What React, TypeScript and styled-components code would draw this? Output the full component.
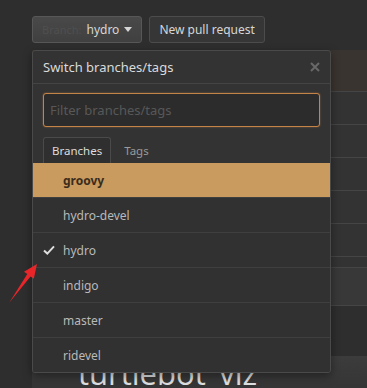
import React from 'react';
import styled, { createGlobalStyle } from 'styled-components';

const GlobalStyle = createGlobalStyle`
  html, body {
    margin: 0;
    padding: 0;
    background: #2e2e2e;
    overflow: hidden;
  }
  body {
    font-family: 'Noto Sans', 'Open Sans', sans-serif;
    color: #ddd;
  }
`;

const branches = ['groovy', 'hydro-devel', 'hydro', 'indigo', 'master', 'ridevel'];
const current = 'hydro';
const focused = 'groovy';

// heights of the file rows that peek out behind the menu
const fileRows: { height: number; tone?: 'commit' | 'light' }[] = [
  { height: 41, tone: 'commit' },
  { height: 32 },
  { height: 32 },
  { height: 32 },
  { height: 32 },
  { height: 32 },
  { height: 10 },
  { height: 37, tone: 'light' },
];

const App = () => (
  <Page>
    <GlobalStyle />
    <Toolbar>
      <Button $selected>
        <Faded>Branch:</Faded>
        <span>hydro</span>
        <Caret />
      </Button>
      <Button>New pull request</Button>
    </Toolbar>

    <Body>
      <FileList>
        {fileRows.map((row, i) => (
          <FileRow key={i} $tone={row.tone} $height={row.height} />
        ))}
      </FileList>
      <Readme>
        <ReadmeTitle>turtlebot_viz</ReadmeTitle>
      </Readme>

      <Dropdown>
        <Header>
          <span>Switch branches/tags</span>
          <svg width="10" height="10" viewBox="0 0 10 10">
            <path d="M1 1 L9 9 M9 1 L1 9" stroke="#686868" strokeWidth="2" />
          </svg>
        </Header>
        <FilterBox>
          <FilterInput placeholder="Filter branches/tags" />
        </FilterBox>
        <Tabs>
          <Tab $active>Branches</Tab>
          <Tab>Tags</Tab>
        </Tabs>
        <List>
          {branches.map((name) => (
            <Item key={name} $focused={name === focused}>
              <Check>
                {name === current && (
                  <svg width="12" height="10" viewBox="0 0 12 10">
                    <path d="M1 5.5 L4.3 8.6 L11 1.4" fill="none" stroke="#ddd" strokeWidth="2" />
                  </svg>
                )}
              </Check>
              {name}
            </Item>
          ))}
        </List>
      </Dropdown>

      <Arrow width="40" height="55" viewBox="0 0 40 55">
        <path d="M9 51 L27.3 22.1 L24 19.8 L37 12 L33.8 26.8 L30.5 24.5 Z" fill="#e8262a" />
      </Arrow>
    </Body>
  </Page>
);

export default App;

const Page = styled.div`
  height: 388px;
  overflow: hidden;
`;

const Toolbar = styled.div`
  display: flex;
  gap: 7px;
  padding: 16px 0 0 32px;
`;

const Button = styled.div<{ $selected?: boolean }>`
  display: flex;
  align-items: center;
  gap: 4px;
  height: 25px;
  padding: 0 9px;
  background: ${(p) => (p.$selected ? 'linear-gradient(#494949, #404040)' : '#363636')};
  border: 1px solid ${(p) => (p.$selected ? '#575757' : '#4c4c4c')};
  border-radius: 3px;
  font-size: 12px;
  color: #d6d6d6;
`;

const Faded = styled.span`
  color: #4f4f4f;
  font-size: 11px;
  margin-right: 1px;
`;

const Caret = styled.span`
  width: 0;
  height: 0;
  margin-left: 1px;
  border-left: 4px solid transparent;
  border-right: 4px solid transparent;
  border-top: 5px solid #d6d6d6;
`;

const Body = styled.div`
  position: relative;
  margin-top: 5px;
`;

const FileList = styled.div`
  margin: 7px 0 0 32px;
  display: flex;
  flex-direction: column;
`;

const FileRow = styled.div<{ $tone?: 'commit' | 'light'; $height: number }>`
  height: ${(p) => p.$height}px;
  border-bottom: 1px solid #454545;
  background: ${(p) =>
    p.$tone === 'commit' ? '#3a3430' : p.$tone === 'light' ? '#383838' : '#333333'};
`;

const Readme = styled.div`
  margin: 50px 0 0 32px;
  height: 60px;
  background: linear-gradient(#3c3c3c, #333 40px);
  padding-left: 46px;
`;

const ReadmeTitle = styled.div`
  font-family: 'Open Sans', sans-serif;
  font-size: 31px;
  line-height: 34px;
  color: #e0e0e0;
`;

const Dropdown = styled.div`
  position: absolute;
  left: 32px;
  top: 0;
  width: 297px;
  background: #333333;
  border: 1px solid #4a4a4a;
  border-radius: 3px;
  box-shadow: 0 3px 10px rgba(0, 0, 0, 0.4);
  overflow: hidden;
`;

const Header = styled.div`
  display: flex;
  align-items: center;
  justify-content: space-between;
  height: 32px;
  padding: 0 10px;
  border-bottom: 1px solid #444;
  font-size: 13px;
  color: #dadada;
`;

const FilterBox = styled.div`
  padding: 9px 10px 0;
`;

const FilterInput = styled.input`
  box-sizing: border-box;
  width: 100%;
  height: 34px;
  padding: 0 6px;
  background: #2c2c2c;
  border: 1px solid #c58447;
  border-radius: 3px;
  box-shadow: 0 0 2px rgba(200, 130, 70, 0.6);
  font-family: inherit;
  font-size: 13px;
  color: #ddd;
  outline: none;
  &::placeholder {
    color: #585858;
  }
`;

const Tabs = styled.div`
  display: flex;
  padding: 10px 10px 0;
`;

const Tab = styled.div<{ $active?: boolean }>`
  padding: 0 8px;
  height: 25px;
  line-height: 25px;
  font-size: 11.5px;
  border: 1px solid ${(p) => (p.$active ? '#4a4a4a' : 'transparent')};
  border-bottom: none;
  border-radius: 3px 3px 0 0;
  background: ${(p) => (p.$active ? '#2f2f2f' : 'transparent')};
  color: ${(p) => (p.$active ? '#dcdcdc' : '#9a9a9a')};
  margin-left: ${(p) => (p.$active ? '0' : '4px')};
`;

const List = styled.div`
  display: flex;
  flex-direction: column;
`;

const Item = styled.div<{ $focused?: boolean }>`
  display: flex;
  align-items: center;
  height: 34px;
  padding-left: 10px;
  border-bottom: 1px solid #3f3f3f;
  background: ${(p) => (p.$focused ? '#c99b5f' : '#313131')};
  color: ${(p) => (p.$focused ? '#3a2c1c' : '#b9b9b9')};
  font-weight: ${(p) => (p.$focused ? 700 : 400)};
  font-size: 12px;
  &:last-child {
    border-bottom: none;
  }
`;

const Check = styled.span`
  display: inline-flex;
  width: 20px;
  align-items: center;
`;

const Arrow = styled.svg`
  position: absolute;
  left: 0;
  top: 202px;
`;
